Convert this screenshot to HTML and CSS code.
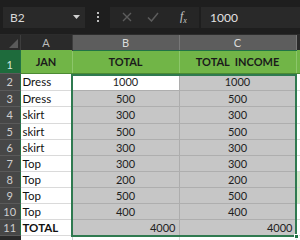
FILE: index.html
```
<!DOCTYPE html>
<html>
<head>
    <title>sheet</title>
    <link rel="stylesheet" href="styles.css">
</head>
<body>
    <div class="toolbar">
        <div class="namebox">
            <span>B2</span>
            <svg class="caret" width="7" height="4" viewBox="0 0 7 4"><path d="M0 0H7L3.5 4Z" fill="#d0d0d0"/></svg>
        </div>
        <div class="dots"><i></i><i></i><i></i></div>
        <div class="fbtns">
            <svg class="ico" width="10" height="10" viewBox="0 0 10 10"><path d="M1 1L9 9M9 1L1 9" stroke="#5c5c5c" stroke-width="1.4"/></svg>
            <svg class="ico" width="12" height="10" viewBox="0 0 12 10"><path d="M1 5.5L4.5 9L11 1" fill="none" stroke="#5c5c5c" stroke-width="1.5"/></svg>
            <span class="fx">f<sub>x</sub></span>
        </div>
        <div class="formula">1000</div>
    </div>

    <div class="sheet">
        <table class="grid">
            <colgroup>
                <col class="c-rh">
                <col class="c-a">
                <col class="c-b">
                <col class="c-c">
                <col class="c-d">
            </colgroup>
            <tr class="colhead">
                <th class="corner"><span class="tri"></span></th>
                <th>A</th>
                <th class="sel">B</th>
                <th class="sel">C</th>
                <th></th>
            </tr>
            <tr class="r1">
                <th class="rh g">1</th>
                <td>JAN</td>
                <td>TOTAL</td>
                <td>TOTAL&nbsp;&nbsp;INCOME</td>
                <td class="tail"></td>
            </tr>
            <tr class="r-tall">
                <th class="rh">2</th>
                <td class="name">Dress</td>
                <td class="num active">1000</td>
                <td class="num">1000</td>
                <td class="blank"></td>
            </tr>
            <tr>
                <th class="rh">3</th>
                <td class="name">Dress</td>
                <td class="num">500</td>
                <td class="num">500</td>
                <td class="blank"></td>
            </tr>
            <tr class="r-tall">
                <th class="rh">4</th>
                <td class="name">skirt</td>
                <td class="num">300</td>
                <td class="num">300</td>
                <td class="blank"></td>
            </tr>
            <tr>
                <th class="rh">5</th>
                <td class="name">skirt</td>
                <td class="num">500</td>
                <td class="num">500</td>
                <td class="blank"></td>
            </tr>
            <tr>
                <th class="rh">6</th>
                <td class="name">skirt</td>
                <td class="num">300</td>
                <td class="num">300</td>
                <td class="blank"></td>
            </tr>
            <tr>
                <th class="rh">7</th>
                <td class="name">Top</td>
                <td class="num">300</td>
                <td class="num">300</td>
                <td class="blank"></td>
            </tr>
            <tr>
                <th class="rh">8</th>
                <td class="name">Top</td>
                <td class="num">200</td>
                <td class="num">200</td>
                <td class="blank tint"></td>
            </tr>
            <tr>
                <th class="rh">9</th>
                <td class="name">Top</td>
                <td class="num">500</td>
                <td class="num">500</td>
                <td class="blank tint"></td>
            </tr>
            <tr>
                <th class="rh">10</th>
                <td class="name">Top</td>
                <td class="num">400</td>
                <td class="num">400</td>
                <td class="blank"></td>
            </tr>
            <tr>
                <th class="rh">11</th>
                <td class="name bold">TOTAL</td>
                <td class="num right">4000</td>
                <td class="num right">4000</td>
                <td class="blank"></td>
            </tr>
            <tr>
                <th class="rh dim"></th>
                <td class="name"></td>
                <td class="num plain"></td>
                <td class="num plain"></td>
                <td class="blank"></td>
            </tr>
        </table>
        <div class="selbox"><span class="handle"></span></div>
    </div>
</body>
</html>
```

FILE: styles.css
```
* {
    margin: 0;
    padding: 0;
    box-sizing: border-box;
}

body {
    width: 300px;
    height: 240px;
    overflow: hidden;
    background: #1f1f1f;
    font-family: Lato, "Liberation Sans", sans-serif;
    font-size: 11px;
}

/* formula bar */
.toolbar {
    display: flex;
    align-items: center;
    height: 35px;
    padding: 0 0 0 3px;
    background: #1e1e1e;
    border-bottom: 1px solid #2c2c2c;
}

.namebox {
    display: flex;
    align-items: center;
    justify-content: space-between;
    width: 82px;
    height: 21px;
    padding: 0 5px 0 7px;
    background: #292929;
    color: #d8d8d8;
    font-size: 12px;
}

.dots {
    display: flex;
    flex-direction: column;
    gap: 2px;
    margin: 0 11px 0 12px;
}

.dots i {
    display: block;
    width: 2px;
    height: 2px;
    background: #bdbdbd;
}

.fbtns {
    display: flex;
    align-items: center;
    width: 89px;
    height: 21px;
    padding-left: 12px;
    background: #262626;
}

.ico {
    margin-right: 15px;
}

.fx {
    margin-left: 6px;
    color: #c8c8c8;
    font-family: "Liberation Serif", serif;
    font-style: italic;
    font-size: 12px;
}

.fx sub {
    font-size: 8px;
}

.formula {
    flex: 1;
    height: 21px;
    margin-left: 2px;
    padding: 3px 0 0 9px;
    background: #292929;
    color: #e2e2e2;
    font-size: 12px;
}

/* sheet */
.sheet {
    position: relative;
}

.grid {
    table-layout: fixed;
    border-collapse: collapse;
    width: 304px;
}

.c-rh { width: 20px; }
.c-a { width: 52px; }
.c-b { width: 107px; }
.c-c { width: 117px; }
.c-d { width: 8px; }

.colhead th {
    height: 15px;
    background: #2a2a2a;
    color: #bcbcbc;
    font-weight: normal;
    font-size: 11px;
    border-right: 1px solid #3d3d3d;
}

.colhead th.sel {
    background: #5d5d5d;
    color: #dcdcdc;
    border-bottom: 1px solid #217346;
    border-right-color: #777;
}

.corner {
    position: relative;
}

.tri {
    position: absolute;
    right: 2px;
    bottom: 2px;
    width: 0;
    height: 0;
    border-left: 9px solid transparent;
    border-bottom: 9px solid #5a5a5a;
}

.rh {
    background: #474747;
    color: #cfcfcf;
    font-weight: normal;
    font-size: 11px;
    text-align: center;
    border-bottom: 1px solid #5a5a5a;
    border-right: 1px solid #217346;
}

.rh.g {
    background: #1e6b3c;
    color: #d6e8dc;
    vertical-align: bottom;
    padding-bottom: 2px;
}

.rh.dim {
    background: #2a2a2a;
    border-right-color: #2a2a2a;
}

.r1 td {
    height: 23px;
    background: #71b547;
    color: #1b1b1b;
    font-weight: bold;
    text-align: center;
    border-right: 1px solid #8cc66a;
    border-bottom: 1px solid #4c8a33;
}

.r1 td.tail {
    background: #71b547;
}

tr td, tr th {
    height: 16px;
}

tr.r-tall td, tr.r-tall th {
    height: 17px;
}

.name {
    background: #fff;
    color: #111;
    padding-left: 2px;
    font-size: 11.5px;
    border-bottom: 1px solid #dadada;
    border-right: 1px solid #d0d0d0;
}

.bold {
    font-weight: bold;
}

.num {
    background: #c6c6c6;
    color: #1e1e1e;
    text-align: center;
    border-bottom: 1px solid #aeaeae;
    border-right: 1px solid #adadad;
}

.num.active {
    background: #fff;
}

.num.right {
    text-align: right;
    padding-right: 3px;
}

.num.plain {
    background: #fff;
    border-color: #dadada;
}

.blank {
    background: #fff;
    border-bottom: 1px solid #dadada;
}

.blank.tint {
    background: #d8ecd0;
}

.selbox {
    position: absolute;
    left: 71px;
    top: 39px;
    width: 226px;
    height: 163px;
    border: 2px solid #2f7a50;
}

.handle {
    position: absolute;
    right: -4px;
    bottom: -4px;
    width: 5px;
    height: 5px;
    background: #217346;
    border: 1px solid #fff;
}
```
